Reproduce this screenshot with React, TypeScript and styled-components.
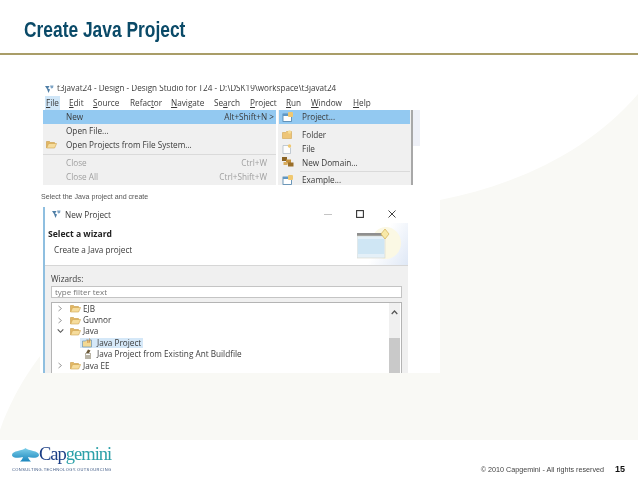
import React from "react";
import styled, { createGlobalStyle } from "styled-components";

const Global = createGlobalStyle`
  html, body { margin: 0; padding: 0; background: #fff; }
  #root { width: 638px; height: 478px; overflow: hidden; }
`;

const Slide = styled.div`
  position: relative;
  width: 638px;
  height: 478px;
  display: flex;
  flex-direction: column;
  overflow: hidden;
  font-family: "Liberation Sans", Arial, sans-serif;
`;
const Backdrop = styled.svg`
  position: absolute;
  left: 0;
  top: 0;
  z-index: 0;
`;
const Header = styled.header`
  position: relative;
  height: 55px;
  flex: none;
  box-sizing: border-box;
  padding: 15px 0 0 24px;
  border-bottom: 2px solid #a99d68;
  background: #fff;
`;
const Title = styled.h1`
  margin: 0;
  font-size: 22px;
  line-height: 29px;
  font-weight: 700;
  color: #0a4a68;
  white-space: nowrap;
  transform: scaleX(0.79);
  transform-origin: left center;
  filter: blur(0.35px);
`;
const Main = styled.main`
  position: relative;
  flex: 1;
  padding: 30px 0 0 40px;
`;
const Capture = styled.div`
  width: 400px;
  height: 288px;
  background: #fff;
  overflow: hidden;
  display: flex;
  flex-direction: column;
  font-family: "Open Sans", sans-serif;
  font-size: 8px;
  color: #3a3a3a;
  filter: blur(0.42px);
`;
const WindowTitle = styled.div`
  height: 10px;
  line-height: 5px;
  padding-left: 5px;
  display: flex;
  gap: 3px;
  font-size: 8.15px;
  white-space: nowrap;
  color: #3a3a3a;
`;
const MenuBar = styled.div`
  height: 15px;
  display: flex;
  align-items: center;
  padding-left: 5px;
  font-size: 8.2px;
  color: #3a3a3a;
`;
const MenuTitle = styled.span<{ $w: number; $active?: boolean }>`
  width: ${(p) => p.$w}px;
  margin-right: ${(p) => (p.$active ? 8 : 0)}px;
  flex: none;
  line-height: 14px;
  box-sizing: border-box;
  padding-left: 1px;
  background: ${(p) => (p.$active ? "#cfe6f8" : "transparent")};
  u { text-underline-offset: 1px; }
`;
const Menus = styled.div`
  height: 75px;
  flex: none;
  display: flex;
  padding-left: 3px;
  overflow: hidden;
`;
const MenuPanel = styled.div`
  width: 233px;
  flex: none;
  background: #f0f0f0;
  display: flex;
  flex-direction: column;
`;
const SubPanel = styled.div`
  position: relative;
  width: 135px;
  margin-left: 2px;
  flex: none;
  background: #f0f0f0;
  border-right: 2px solid #a8a8a8;
  box-sizing: border-box;
  padding-left: 1px;
  padding-right: 1px;
  display: flex;
  flex-direction: column;
`;
const Shadow = styled.div`
  width: 7px;
  height: 36px;
  background: #eef0f7;
`;
const MenuRow = styled.div<{ $hi?: boolean; $dim?: boolean; $h?: number }>`
  height: ${(p) => p.$h ?? 14}px;
  flex: none;
  box-sizing: border-box;
  padding-bottom: 1px;
  display: flex;
  align-items: center;
  background: ${(p) => (p.$hi ? "#93c9f1" : "transparent")};
  color: ${(p) => (p.$dim ? "#a0a0a0" : "#3a3a3a")};
  font-size: 8.2px;
  white-space: nowrap;
`;
const IconSlot = styled.span`
  width: 23px;
  flex: none;
  box-sizing: border-box;
  padding-left: 3px;
  display: flex;
  align-items: center;
`;
const Shortcut = styled.span`
  margin-left: auto;
  padding-right: 2px;
`;
const MutedShortcut = styled(Shortcut)`
  padding-right: 9px;
`;
const MenuRule = styled.div<{ $ml: number }>`
  height: 1px;
  flex: none;
  margin: 2px 0 1px ${(p) => p.$ml}px;
  background: #dadada;
`;
const Caption = styled.div`
  height: 22px;
  flex: none;
  box-sizing: border-box;
  padding: 8px 0 0 1px;
  font-family: "Liberation Sans", sans-serif;
  font-size: 7.1px;
  line-height: 8px;
  color: #555;
`;
const Dialog = styled.div`
  width: 365px;
  margin-left: 3px;
  box-sizing: border-box;
  flex: 1;
  border-left: 2px solid #8fbfe0;
  display: flex;
  flex-direction: column;
  min-height: 0;
`;
const DialogBar = styled.div`
  height: 16px;
  flex: none;
  box-sizing: border-box;
  padding: 0 0 2px 7px;
  display: flex;
  align-items: center;
  gap: 4px;
  font-size: 8.2px;
  color: #3a3a3a;
`;
const WinControls = styled.div`
  margin-left: auto;
  display: flex;
  align-items: center;
  gap: 24px;
  padding-right: 12px;
`;
const Banner = styled.div`
  height: 42px;
  flex: none;
  display: flex;
  border-bottom: 1px solid #d6d6d6;
`;
const BannerText = styled.div`
  flex: 1;
  padding: 6px 0 0 3px;
`;
const BannerTitle = styled.div`
  font-size: 8.6px;
  line-height: 11px;
  font-weight: 700;
  color: #222;
`;
const BannerSub = styled.div`
  font-size: 8.2px;
  line-height: 11px;
  margin: 4px 0 0 6px;
  color: #3a3a3a;
`;
const BannerArt = styled.div`
  width: 51px;
  display: flex;
  background: linear-gradient(120deg, #fff 45%, #dfe8f6 100%);
`;
const Body = styled.div`
  flex: 1;
  min-height: 0;
  background: #f0f0f0;
  padding: 7px 6px 0 6px;
  display: flex;
  flex-direction: column;
`;
const Label = styled.div`
  height: 13px;
  flex: none;
  font-size: 8.2px;
  line-height: 11px;
  color: #3a3a3a;
`;
const Filter = styled.div`
  height: 12px;
  flex: none;
  box-sizing: border-box;
  background: #fff;
  border: 1px solid #c4c4c4;
  padding-left: 3px;
  font-size: 8px;
  line-height: 10px;
  color: #777;
`;
const TreeBox = styled.div`
  margin-top: 4px;
  flex: 1;
  min-height: 0;
  box-sizing: border-box;
  background: #fff;
  border: 1px solid #b4b4b4;
  border-bottom: 0;
  display: flex;
`;
const Tree = styled.div`
  flex: 1;
`;
const TreeRow = styled.div<{ $indent?: boolean }>`
  height: 11.4px;
  display: flex;
  align-items: center;
  padding-left: ${(p) => (p.$indent ? 28 : 5)}px;
  font-size: 8.2px;
  color: #3a3a3a;
  white-space: nowrap;
`;
const Chevron = styled.span`
  width: 13px;
  flex: none;
  display: flex;
  align-items: center;
`;
const RowLabel = styled.span`
  margin-left: 2px;
  line-height: 10px;
`;
const LeafIcon = styled.span`
  width: 15px;
  flex: none;
  display: flex;
  justify-content: center;
  align-items: center;
`;
const Selection = styled.span`
  display: flex;
  align-items: center;
  height: 10px;
  padding-right: 2px;
  line-height: 10px;
  background: #d5e8f8;
`;
const Scroll = styled.div`
  width: 11px;
  margin-right: 1px;
  flex: none;
  background: #f0f0f0;
  display: flex;
  flex-direction: column;
  align-items: center;
`;
const ScrollUp = styled.div`
  height: 35px;
  flex: none;
  padding-top: 3px;
  box-sizing: border-box;
`;
const Thumb = styled.div`
  align-self: stretch;
  flex: 1;
  background: #c9c9c9;
`;
const Footer = styled.footer`
  position: relative;
  height: 38px;
  flex: none;
  background: #fff;
  display: flex;
  box-sizing: border-box;
  padding: 5px 13px 0 12px;
`;
const Logo = styled.div`
  width: 100px;
  display: flex;
  flex-direction: column;
  filter: blur(0.3px);
`;
const LogoTop = styled.div`
  display: flex;
  align-items: center;
  height: 19px;
  svg { flex: none; }
`;
const LogoWord = styled.span`
  font-family: "Liberation Serif", serif;
  font-size: 18.5px;
  line-height: 19px;
  letter-spacing: -1px;
  color: #2ba0a8;
  white-space: nowrap;
  b { font-weight: 400; color: #1c3f86; }
`;
const Tagline = styled.div`
  margin-top: 3px;
  font-size: 4px;
  line-height: 5px;
  letter-spacing: 0.42px;
  color: #34507e;
  white-space: nowrap;
`;
const Legal = styled.div`
  margin-left: auto;
  padding-top: 19px;
  display: flex;
  gap: 11px;
  align-items: baseline;
  font-size: 7.2px;
  line-height: 10px;
  color: #444;
  filter: blur(0.2px);
`;
const PageNo = styled.b`
  font-size: 9px;
  color: #111;
`;

const Folder = () => (
  <svg width="11" height="9" viewBox="0 0 11 9">
    <path d="M.5 8V1.500h3l1 1h4v1.500" fill="#e3b865" stroke="#c99a44" strokeWidth=".6" />
    <path d="M.6 8l2-4.500h8L8.600 8z" fill="#f6dc9c" stroke="#d0a550" strokeWidth=".6" />
  </svg>
);
const ChevronRight = () => (
  <svg width="6" height="7" viewBox="0 0 6 7">
    <path d="M1.500 1l3 2.500-3 2.500" fill="none" stroke="#999" strokeWidth="1" />
  </svg>
);
const ChevronDown = () => (
  <svg width="7" height="6" viewBox="0 0 7 6">
    <path d="M.7 1.300l2.800 3 2.800-3" fill="none" stroke="#555" strokeWidth="1.100" />
  </svg>
);
const NewProjectIcon = () => (
  <svg width="11" height="10" viewBox="0 0 11 10">
    <rect x="1" y="2" width="8.500" height="7.500" fill="#fff" stroke="#4a7fa8" strokeWidth=".8" />
    <rect x="1" y="2" width="8.500" height="2" fill="#5e97c4" />
    <rect x="6" y="0" width="5" height="5" rx="1" fill="#f0c870" />
  </svg>
);
const FolderNew = () => (
  <svg width="10" height="9" viewBox="0 0 10 9">
    <path d="M.5 8.500V2.500h3l1-1h5v7z" fill="#eec577" stroke="#d0a550" strokeWidth=".6" />
    <circle cx="7.500" cy="2" r="1.700" fill="#f5dc96" />
  </svg>
);
const FileNew = () => (
  <svg width="10" height="10" viewBox="0 0 10 10">
    <path d="M1 1.500h5l2.500 2.500v5.500H1z" fill="#fdfdfd" stroke="#a9b6c2" strokeWidth=".7" />
    <circle cx="7.500" cy="2" r="1.700" fill="#f0c870" />
  </svg>
);
const DomainIcon = () => (
  <svg width="12" height="10" viewBox="0 0 12 10">
    <rect x="0" y="0" width="5" height="4" fill="#8a6426" />
    <rect x="4" y="2.500" width="5" height="4" fill="#c4913c" />
    <rect x="6" y="5.500" width="5.500" height="4" fill="#9a6f2a" />
    <rect x="1.500" y="5" width="4" height="3" fill="#d9ad5f" />
  </svg>
);
const DialogIcon = () => (
  <svg width="9" height="9" viewBox="0 0 9 9">
    <path d="M0 1h4.500L3 3.500l2 1L3.500 8 2 4z" fill="#4f7ea6" />
    <path d="M5 .5h3.500L8 3 6 3.500z" fill="#7da3c4" />
  </svg>
);
const Minimize = () => (
  <svg width="8" height="3" viewBox="0 0 8 3"><path d="M0 1.500h8" stroke="#c4c4c4" /></svg>
);
const Maximize = () => (
  <svg width="8" height="8" viewBox="0 0 8 8">
    <rect x=".6" y=".6" width="6.800" height="6.800" fill="none" stroke="#333" strokeWidth="1.100" />
  </svg>
);
const Close = () => (
  <svg width="8" height="8" viewBox="0 0 8 8">
    <path d="M.5.500l7 7M7.500.500l-7 7" stroke="#444" strokeWidth="1" />
  </svg>
);
const WizardArt = () => (
  <svg width="51" height="41" viewBox="0 0 51 41">
    <ellipse cx="29" cy="20" rx="15" ry="16" fill="#fbf8e4" />
    <rect x="0" y="10" width="28" height="3" fill="#8f8f8f" />
    <rect x="0" y="13" width="28" height="22" fill="#e4f0f8" stroke="#d6d6c8" strokeWidth=".6" />
    <rect x="1" y="16" width="26" height="15" fill="#cfe6f4" />
    <path d="M28 6l4 5-4 5-4-5z" fill="#f8e9a8" stroke="#d8b860" strokeWidth=".8" />
  </svg>
);
const JavaProjIcon = () => (
  <svg width="11" height="10" viewBox="0 0 11 10">
    <path d="M.5 9V3h3l1-1h5v7z" fill="#f3d993" stroke="#6b95b8" strokeWidth=".7" />
    <path d="M5 1.500c1.500 1 .5 2 1 3.500M7.500.5c1 1.500-.5 2 0 4" fill="none" stroke="#c07a30" strokeWidth=".8" />
  </svg>
);
const AntIcon = () => (
  <svg width="10" height="10" viewBox="0 0 10 10">
    <rect x="2" y="4" width="6" height="6" fill="#b9b4a6" />
    <rect x="3" y="5" width="4" height="1" fill="#fff" />
    <path d="M3 4l2-3.500 2.500 1L6 4z" fill="#6d5a3a" />
  </svg>
);
const ScrollArrow = () => (
  <svg width="7" height="5" viewBox="0 0 7 5">
    <path d="M.7 4l2.800-3 2.800 3" fill="none" stroke="#555" strokeWidth="1.200" />
  </svg>
);
const Spade = () => (
  <svg width="27" height="15" viewBox="0 0 27 15">
    <defs>
      <linearGradient id="spade" x1="0" y1="0" x2="0" y2="1">
        <stop offset="0" stopColor="#7fd0ea" />
        <stop offset="1" stopColor="#1a86bd" />
      </linearGradient>
    </defs>
    <path
      d="M13.500 1C16 4 27 3.500 27 8c0 3-7 3.500-11 2 .5 1.500 1.500 3.500 3 4.500H8c1.500-1 2.500-3 3-4.500-4 1.500-11 1-11-2C0 3.500 11 4 13.500 1z"
      fill="url(#spade)"
    />
  </svg>
);

export default function App() {
  return (
    <>
      <Global />
      <Slide>
        <Backdrop width="638" height="478" viewBox="0 0 638 478">
          <path
            d="M638 94C590 150 520 184 440 200C280 232 70 240 0 430V478H638Z"
            fill="#f9f9f5"
          />
        </Backdrop>
        <Header>
          <Title>Create Java Project</Title>
        </Header>
        <Main>
          <Capture>
            <WindowTitle>
              <DialogIcon />
              <span>t3javat24 - Design - Design Studio for T24 - D:\DSK19\workspace\t3javat24</span>
            </WindowTitle>
            <MenuBar>
              <MenuTitle $w={15} $active><u>F</u>ile</MenuTitle>
              <MenuTitle $w={24}><u>E</u>dit</MenuTitle>
              <MenuTitle $w={37}><u>S</u>ource</MenuTitle>
              <MenuTitle $w={41}>Refac<u>t</u>or</MenuTitle>
              <MenuTitle $w={43}><u>N</u>avigate</MenuTitle>
              <MenuTitle $w={36}>Se<u>a</u>rch</MenuTitle>
              <MenuTitle $w={36}><u>P</u>roject</MenuTitle>
              <MenuTitle $w={25}><u>R</u>un</MenuTitle>
              <MenuTitle $w={42}><u>W</u>indow</MenuTitle>
              <MenuTitle $w={30}><u>H</u>elp</MenuTitle>
            </MenuBar>
            <Menus>
              <MenuPanel>
                <MenuRow $hi>
                  <IconSlot />
                  New
                  <Shortcut>Alt+Shift+N &gt;</Shortcut>
                </MenuRow>
                <MenuRow>
                  <IconSlot />
                  Open File...
                </MenuRow>
                <MenuRow>
                  <IconSlot><Folder /></IconSlot>
                  Open Projects from File System...
                </MenuRow>
                <MenuRule $ml={0} />
                <MenuRow $dim>
                  <IconSlot />
                  Close
                  <MutedShortcut>Ctrl+W</MutedShortcut>
                </MenuRow>
                <MenuRow $dim>
                  <IconSlot />
                  Close All
                  <MutedShortcut>Ctrl+Shift+W</MutedShortcut>
                </MenuRow>
              </MenuPanel>
              <SubPanel>
                <MenuRow $hi>
                  <IconSlot><NewProjectIcon /></IconSlot>
                  Project...
                </MenuRow>
                <MenuRow $h={4} />
                <MenuRow>
                  <IconSlot><FolderNew /></IconSlot>
                  Folder
                </MenuRow>
                <MenuRow>
                  <IconSlot><FileNew /></IconSlot>
                  File
                </MenuRow>
                <MenuRow $h={13}>
                  <IconSlot><DomainIcon /></IconSlot>
                  New Domain...
                </MenuRow>
                <MenuRule $ml={21} />
                <MenuRow>
                  <IconSlot><NewProjectIcon /></IconSlot>
                  Example...
                </MenuRow>
              </SubPanel>
              <Shadow />
            </Menus>
            <Caption>Select the Java project and create</Caption>
            <Dialog>
              <DialogBar>
                <DialogIcon />
                New Project
                <WinControls>
                  <Minimize />
                  <Maximize />
                  <Close />
                </WinControls>
              </DialogBar>
              <Banner>
                <BannerText>
                  <BannerTitle>Select a wizard</BannerTitle>
                  <BannerSub>Create a Java project</BannerSub>
                </BannerText>
                <BannerArt><WizardArt /></BannerArt>
              </Banner>
              <Body>
                <Label>Wizards:</Label>
                <Filter>type filter text</Filter>
                <TreeBox>
                  <Tree>
                    <TreeRow><Chevron><ChevronRight /></Chevron><Folder /><RowLabel>EJB</RowLabel></TreeRow>
                    <TreeRow><Chevron><ChevronRight /></Chevron><Folder /><RowLabel>Guvnor</RowLabel></TreeRow>
                    <TreeRow><Chevron><ChevronDown /></Chevron><Folder /><RowLabel>Java</RowLabel></TreeRow>
                    <TreeRow $indent>
                      <Selection>
                        <LeafIcon><JavaProjIcon /></LeafIcon>
                        <RowLabel>Java Project</RowLabel>
                      </Selection>
                    </TreeRow>
                    <TreeRow $indent>
                      <LeafIcon><AntIcon /></LeafIcon>
                      <RowLabel>Java Project from Existing Ant Buildfile</RowLabel>
                    </TreeRow>
                    <TreeRow><Chevron><ChevronRight /></Chevron><Folder /><RowLabel>Java EE</RowLabel></TreeRow>
                  </Tree>
                  <Scroll>
                    <ScrollUp><ScrollArrow /></ScrollUp>
                    <Thumb />
                  </Scroll>
                </TreeBox>
              </Body>
            </Dialog>
          </Capture>
        </Main>
        <Footer>
          <Logo>
            <LogoTop>
              <Spade />
              <LogoWord><b>Cap</b>gemini</LogoWord>
            </LogoTop>
            <Tagline>CONSULTING.TECHNOLOGY.OUTSOURCING</Tagline>
          </Logo>
          <Legal>
            <span>© 2010 Capgemini - All rights reserved</span>
            <PageNo>15</PageNo>
          </Legal>
        </Footer>
      </Slide>
    </>
  );
}
